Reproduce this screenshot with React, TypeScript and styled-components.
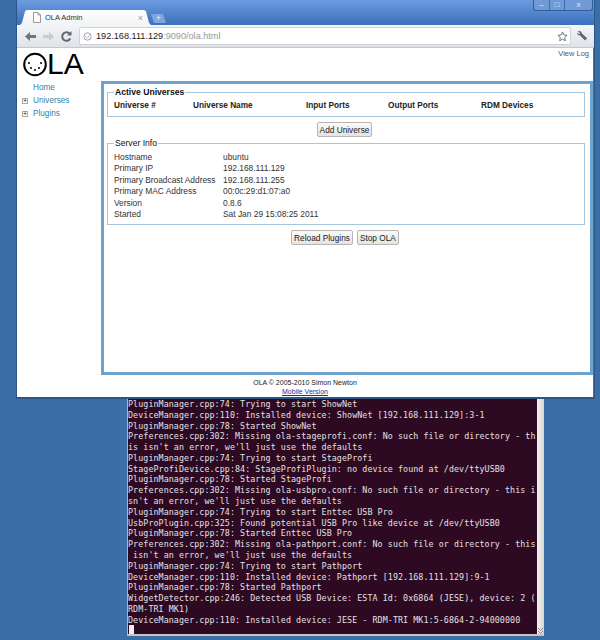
import React from "react";
import styled, { createGlobalStyle } from "styled-components";

const GlobalStyle = createGlobalStyle`
  html, body { margin: 0; padding: 0; background: #3a6ea5; }
  * { box-sizing: border-box; }
`;

const Desktop = styled.div`
  position: relative;
  width: 600px;
  height: 640px;
  overflow: hidden;
  background: #3a6ea5;
  font-family: "Liberation Sans", Arial, sans-serif;
`;

const BrowserWindow = styled.div`
  position: absolute;
  left: 16px;
  top: 0;
  width: 579px;
  height: 399px;
  display: flex;
  flex-direction: column;
  border: 1px solid #2a5586;
  border-top: 0;
  border-bottom-width: 2px;
  background: linear-gradient(#5f92d8, #3f72bd 25px);
`;

const TitleBar = styled.div`
  height: 25px;
  flex: none;
  display: flex;
  align-items: flex-end;
  padding-left: 3px;
  background: linear-gradient(#6c9be0, #3c70bb);
  position: relative;
`;

const Tab = styled.div`
  width: 131px;
  height: 15px;
  display: flex;
  align-items: center;
  gap: 4px;
  padding: 0 8px 0 13px;
  background: linear-gradient(#fff, #f1f3f5);
  clip-path: polygon(0 100%, 2px 85%, 5px 8%, 7px 0, calc(100% - 7px) 0, calc(100% - 5px) 8%, calc(100% - 2px) 85%, 100% 100%);
  color: #333;
  font-size: 7.5px;
`;

const TabTitle = styled.span`
  flex: 1;
`;

const TabClose = styled.span`
  color: #999;
  font-size: 9px;
`;

const NewTab = styled.div`
  width: 15px;
  height: 9px;
  margin: 0 0 2px 0;
  background: #7ea6dc;
  clip-path: polygon(0 0, 80% 0, 100% 100%, 20% 100%);
  color: #e8f0fb;
  font-size: 9px;
  line-height: 9px;
  text-align: center;
`;

const WindowControls = styled.div`
  position: absolute;
  right: 1px;
  top: 0;
  height: 11px;
  display: flex;
  border: 1px solid #2f5f9f;
  border-top: 0;
  border-radius: 0 0 3px 3px;
  background: #6f9ad6;
`;

const WindowControl = styled.div<{ $wide?: boolean }>`
  width: ${(p) => (p.$wide ? 28 : 15)}px;
  border-left: 1px solid #3e6daf;
  color: #e6eefa;
  font-size: 8px;
  line-height: 9px;
  text-align: center;
  &:first-child { border-left: 0; }
`;

const Toolbar = styled.div`
  height: 23px;
  flex: none;
  display: flex;
  align-items: center;
  padding: 0 6px 0 7px;
  gap: 5px;
  background: linear-gradient(#f3f5f7, #dfe3e7);
  border-bottom: 1px solid #c4c8cc;
`;

const NavIcon = styled.svg`
  width: 13px;
  height: 13px;
  flex: none;
`;

const AddressBar = styled.div`
  flex: 1;
  height: 18px;
  margin-left: 1px;
  display: flex;
  align-items: center;
  gap: 4px;
  padding: 0 2px 0 3px;
  background: #fff;
  border: 1px solid #cfd2d6;
  border-radius: 2px;
  font-size: 9.15px;
  color: #222;
`;

const AddressText = styled.span`
  flex: 1;
`;

const Muted = styled.span`
  color: #999;
`;

const Page = styled.div`
  flex: 1;
  min-height: 0;
  display: flex;
  flex-direction: column;
  background: #fff;
  margin-right: 1px;
`;

const Header = styled.div`
  height: 33px;
  flex: none;
  display: flex;
  justify-content: space-between;
  padding: 2px 4px 0 6px;
`;

const Logo = styled.div`
  display: flex;
  align-items: center;
  height: 28px;
  color: #000;
  font-size: 30px;
  line-height: 28px;
`;

const ViewLog = styled.a`
  color: #555;
  font-size: 7.5px;
  line-height: 10px;
  margin-top: -1px;
`;

const Body = styled.div`
  flex: 1;
  min-height: 0;
  display: flex;
`;

const Sidebar = styled.div`
  width: 84px;
  flex: none;
  padding: 0 0 0 5px;
`;

const NavRow = styled.div`
  height: 13px;
  display: flex;
  align-items: center;
  gap: 5px;
  color: #2f7fac;
  font-size: 8.2px;
`;

const Expander = styled.span<{ $hidden?: boolean }>`
  width: 6px;
  height: 6px;
  flex: none;
  border: 1px solid #aaa;
  color: #222;
  font-size: 7px;
  line-height: 4px;
  text-align: center;
  visibility: ${(p) => (p.$hidden ? "hidden" : "visible")};
`;

const Panel = styled.div`
  width: 492px;
  height: 294px;
  flex: none;
  display: flex;
  flex-direction: column;
  padding: 4px 5px 0 3px;
  border: 3px solid #6ea3cd;
`;

const Box = styled.fieldset<{ $top?: number }>`
  margin: ${(p) => p.$top ?? 0}px 0 0;
  padding: 0 6px 0;
  border: 1px solid #a5c6dc;
  min-width: 0;
`;

const BoxTitle = styled.legend<{ $strong?: boolean }>`
  padding: 0 1px;
  font-size: 8.6px;
  line-height: 9px;
  font-weight: ${(p) => (p.$strong ? 700 : 400)};
  color: #111;
`;

const HeadRow = styled.div`
  height: 19px;
  display: grid;
  grid-template-columns: 79px 113px 82px 93px 1fr;
  align-items: start;
  padding-top: 2.5px;
  font-size: 8.25px;
  line-height: 11px;
  font-weight: 700;
  color: #222;
`;

const ButtonRow = styled.div<{ $top: number; $gap?: number }>`
  display: flex;
  justify-content: center;
  gap: ${(p) => p.$gap ?? 0}px;
  margin-top: ${(p) => p.$top}px;
  padding-right: ${(p) => (p.$gap ? 2 : 3)}px;
`;

const Button = styled.button`
  height: 15px;
  padding: 0 2px;
  font-family: inherit;
  font-size: 8.3px;
  color: #222;
  background: linear-gradient(#fafafa, #e4e4e4);
  border: 1px solid #b5b5b5;
  border-radius: 2px;
`;

const InfoGrid = styled.div`
  display: grid;
  grid-template-columns: 109px 1fr;
  grid-auto-rows: 11.4px;
  padding: 4px 0 4px;
  font-size: 8.4px;
  line-height: 11.4px;
  color: #333;
`;

const Footer = styled.div`
  flex: none;
  text-align: center;
  font-size: 7px;
  line-height: 9px;
  color: #222;
  height: 22px;
  padding-top: 3px;
`;

const MobileLink = styled.a`
  display: block;
  color: #2a2a9a;
  text-decoration: underline;
`;

const TerminalWindow = styled.div`
  position: absolute;
  left: 127px;
  top: 399px;
  width: 417px;
  height: 237px;
  display: flex;
  background: #2d0922;
  border-left: 1px solid #b8b4b0;
  border-bottom: 2px solid #c9c6c2;
`;

const TerminalBody = styled.div`
  flex: 1;
  min-width: 0;
  overflow: hidden;
`;

const TerminalText = styled.pre`
  margin: 0;
  color: #e4e0e2;
  font-family: "DejaVu Sans Mono", monospace;
  font-size: 8.33px;
  letter-spacing: 0.08px;
  line-height: 10.78px;
`;

const Cursor = styled.div`
  width: 5px;
  height: 10px;
  margin-left: 1px;
  background: #eee;
`;

const Scrollbar = styled.div`
  width: 7px;
  flex: none;
  display: flex;
  align-items: flex-end;
  background: linear-gradient(90deg, #f4f3f1, #d8d5d1);
`;

const log = `PluginManager.cpp:74: Trying to start ShowNet
DeviceManager.cpp:110: Installed device: ShowNet [192.168.111.129]:3-1
PluginManager.cpp:78: Started ShowNet
Preferences.cpp:302: Missing ola-stageprofi.conf: No such file or directory - th
is isn't an error, we'll just use the defaults
PluginManager.cpp:74: Trying to start StageProfi
StageProfiDevice.cpp:84: StageProfiPlugin: no device found at /dev/ttyUSB0
PluginManager.cpp:78: Started StageProfi
Preferences.cpp:302: Missing ola-usbpro.conf: No such file or directory - this i
sn't an error, we'll just use the defaults
PluginManager.cpp:74: Trying to start Enttec USB Pro
UsbProPlugin.cpp:325: Found potential USB Pro like device at /dev/ttyUSB0
PluginManager.cpp:78: Started Enttec USB Pro
Preferences.cpp:302: Missing ola-pathport.conf: No such file or directory - this
 isn't an error, we'll just use the defaults
PluginManager.cpp:74: Trying to start Pathport
DeviceManager.cpp:110: Installed device: Pathport [192.168.111.129]:9-1
PluginManager.cpp:78: Started Pathport
WidgetDetector.cpp:246: Detected USB Device: ESTA Id: 0x6864 (JESE), device: 2 (
RDM-TRI MK1)
DeviceManager.cpp:110: Installed device: JESE - RDM-TRI MK1:5-6864-2-94000000`;

const info: [string, string][] = [
  ["Hostname", "ubuntu"],
  ["Primary IP", "192.168.111.129"],
  ["Primary Broadcast Address", "192.168.111.255"],
  ["Primary MAC Address", "00:0c:29:d1:07:a0"],
  ["Version", "0.8.6"],
  ["Started", "Sat Jan 29 15:08:25 2011"],
];

const columns = ["Universe #", "Universe Name", "Input Ports", "Output Ports", "RDM Devices"];

const App = () => {
  return (
    <Desktop>
      <GlobalStyle />
      <BrowserWindow>
        <TitleBar>
          <Tab>
            <svg width="8" height="11" viewBox="0 0 8 11">
              <path d="M.5.5h4.5l2.500 2.500v7.500h-7z" fill="#fff" stroke="#999" />
              <path d="M5 .5v2.500h2.500" fill="none" stroke="#999" />
            </svg>
            <TabTitle>OLA Admin</TabTitle>
            <TabClose>×</TabClose>
          </Tab>
          <NewTab>+</NewTab>
          <WindowControls>
            <WindowControl>–</WindowControl>
            <WindowControl>□</WindowControl>
            <WindowControl $wide>x</WindowControl>
          </WindowControls>
        </TitleBar>
        <Toolbar>
          <NavIcon viewBox="0 0 13 13">
            <path d="M1 6.500 6 2v3h6v3H6v3z" fill="#6d7680" />
          </NavIcon>
          <NavIcon viewBox="0 0 13 13">
            <path d="M12 6.500 7 2v3H1v3h6v3z" fill="#c6cbd0" />
          </NavIcon>
          <NavIcon viewBox="0 0 13 13">
            <path d="M10.300 8.500a4.300 4.300 0 1 1-.3-4.500" fill="none" stroke="#5f6870" strokeWidth="2" />
            <path d="M11.500 1v4.500H7z" fill="#5f6870" />
          </NavIcon>
          <AddressBar>
            <svg width="9" height="9" viewBox="0 0 11 11">
              <circle cx="5.500" cy="5.500" r="4.500" fill="#fff" stroke="#8a8f94" />
              <path d="M1.500 4c2 0 2 3 4 3s1-3 3-4" fill="none" stroke="#a5aaaf" />
            </svg>
            <AddressText>
              192.168.111.129<Muted>:9090/ola.html</Muted>
            </AddressText>
            <svg width="11" height="11" viewBox="0 0 12 12">
              <path d="M6 1l1.500 3.300 3.500.4-2.600 2.400.7 3.500L6 8.900l-3.100 1.700.7-3.500L1 4.700l3.500-.4z" fill="#fff" stroke="#666" />
            </svg>
          </AddressBar>
          <svg width="12" height="12" viewBox="0 0 13 13">
            <path d="M2 1.500c2-1 4 0 4.300 2l5.700 5.500-2.200 2.500-5.700-5.700C2.300 6 1 4.500 1.500 3l2 1.500 1-1z" fill="#5f6870" />
          </svg>
        </Toolbar>
        <Page>
          <Header>
            <Logo>
              <svg width="24" height="25" viewBox="0 0 24 25">
                <circle cx="12" cy="12.500" r="10.800" fill="none" stroke="#000" strokeWidth="2" />
                <circle cx="6" cy="11" r="1" />
                <circle cx="18" cy="11" r="1" />
                <circle cx="8" cy="16" r="1" />
                <circle cx="16" cy="16" r="1" />
                <circle cx="12" cy="18" r="1" />
              </svg>
              LA
            </Logo>
            <ViewLog>View Log</ViewLog>
          </Header>
          <Body>
            <Sidebar>
              <NavRow>
                <Expander $hidden />
                Home
              </NavRow>
              <NavRow>
                <Expander>+</Expander>
                Universes
              </NavRow>
              <NavRow>
                <Expander>+</Expander>
                Plugins
              </NavRow>
            </Sidebar>
            <Panel>
              <Box>
                <BoxTitle $strong>Active Universes</BoxTitle>
                <HeadRow>
                  {columns.map((c) => (
                    <span key={c}>{c}</span>
                  ))}
                </HeadRow>
              </Box>
              <ButtonRow $top={5}>
                <Button>Add Universe</Button>
              </ButtonRow>
              <Box $top={2}>
                <BoxTitle>Server Info</BoxTitle>
                <InfoGrid>
                  {info.map(([k, v]) => (
                    <React.Fragment key={k}>
                      <span>{k}</span>
                      <span>{v}</span>
                    </React.Fragment>
                  ))}
                </InfoGrid>
              </Box>
              <ButtonRow $top={5} $gap={4}>
                <Button>Reload Plugins</Button>
                <Button>Stop OLA</Button>
              </ButtonRow>
            </Panel>
          </Body>
          <Footer>
            OLA © 2005-2010 Simon Newton
            <MobileLink>Mobile Version</MobileLink>
          </Footer>
        </Page>
      </BrowserWindow>
      <TerminalWindow>
        <TerminalBody>
          <TerminalText>{log}</TerminalText>
          <Cursor />
        </TerminalBody>
        <Scrollbar>
          <svg width="7" height="8" viewBox="0 0 7 8">
            <path d="M1 2l2.500 2.500L6 2M1 5l2.500 2.500L6 5" fill="none" stroke="#8a8784" />
          </svg>
        </Scrollbar>
      </TerminalWindow>
    </Desktop>
  );
};

export default App;
